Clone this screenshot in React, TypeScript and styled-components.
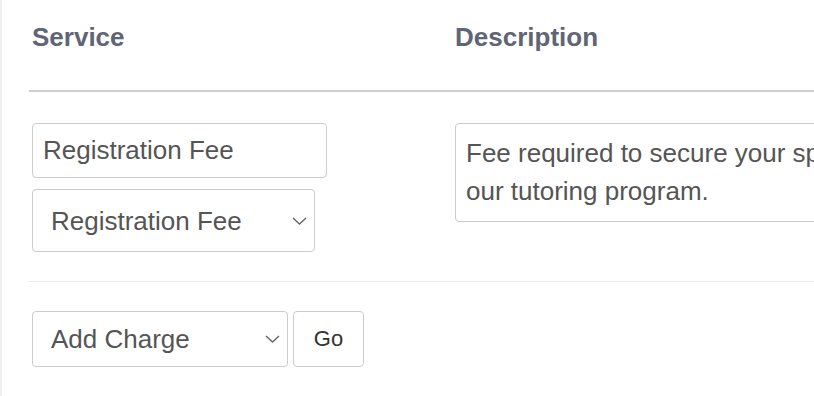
import * as React from 'react';
import styled, { createGlobalStyle } from 'styled-components';

const GlobalStyle = createGlobalStyle`
  html, body {
    margin: 0;
    padding: 0;
    background: #fff;
    overflow: hidden;
  }
  body {
    font-family: "Liberation Sans", Arial, Helvetica, sans-serif;
  }
`;

const Page = styled.div`
  height: 396px;
  border-left: 2px solid #efeff1;
  padding-left: 27px;
  box-sizing: border-box;
`;

const ChargeTable = styled.div`
  display: grid;
  grid-template-columns: 423px 1fr;
`;

const HeadCell = styled.div`
  height: 92px;
  box-sizing: border-box;
  padding: 22px 3px 0;
  border-bottom: 2px solid #cfcfcf;
  font-size: 26px;
  line-height: 30px;
  font-weight: bold;
  color: #5f6576;
`;

const BodyCell = styled.div`
  height: 190px;
  box-sizing: border-box;
  padding: 31px 3px 0;
  border-bottom: 1px solid #ececec;
  display: flex;
  flex-direction: column;
  align-items: flex-start;
  gap: 11px;
`;

const TextInput = styled.input`
  width: 295px;
  height: 55px;
  box-sizing: border-box;
  border: 1px solid #cccccc;
  border-radius: 4px;
  padding: 0 10px;
  font-family: inherit;
  font-size: 26px;
  color: #555;
  outline: none;
`;

const SelectBox = styled.div<{ $w: number; $h: number }>`
  position: relative;
  width: ${(p) => p.$w}px;
  height: ${(p) => p.$h}px;
`;

const Select = styled.select`
  appearance: none;
  -webkit-appearance: none;
  width: 100%;
  height: 100%;
  box-sizing: border-box;
  border: 1px solid #cccccc;
  border-radius: 4px;
  background: #fff;
  padding: 0 34px 0 18px;
  font-family: inherit;
  font-size: 26px;
  color: #555;
  outline: none;
`;

const Chevron = styled.svg`
  position: absolute;
  right: 8px;
  top: 50%;
  margin-top: -4px;
  pointer-events: none;
`;

const DescArea = styled.textarea`
  width: 432px;
  height: 99px;
  box-sizing: border-box;
  border: 1px solid #cccccc;
  border-radius: 4px;
  padding: 10px 10px;
  font-family: inherit;
  font-size: 26px;
  line-height: 38px;
  color: #555;
  resize: none;
  overflow: hidden;
  outline: none;
`;

const AddRow = styled.div`
  padding: 29px 3px 0;
  display: flex;
  align-items: center;
  gap: 5px;
`;

const GoButton = styled.button`
  width: 71px;
  height: 56px;
  box-sizing: border-box;
  border: 1px solid #cccccc;
  border-radius: 4px;
  background: #fff;
  font-family: inherit;
  font-size: 22px;
  color: #333;
  padding: 0;
  cursor: pointer;
`;

const ChevronIcon = () => (
  <Chevron width="15" height="8" viewBox="0 0 15 8">
    <polyline points="1,1 7.5,7 14,1" fill="none" stroke="#666" strokeWidth="1.4" />
  </Chevron>
);

export default function App() {
  return (
    <Page>
      <GlobalStyle />
      <ChargeTable>
        <HeadCell>Service</HeadCell>
        <HeadCell>Description</HeadCell>
        <BodyCell>
          <TextInput defaultValue="Registration Fee" />
          <SelectBox $w={283} $h={63}>
            <Select defaultValue="reg">
              <option value="reg">Registration Fee</option>
            </Select>
            <ChevronIcon />
          </SelectBox>
        </BodyCell>
        <BodyCell>
          <DescArea defaultValue="Fee required to secure your spot in our tutoring program." />
        </BodyCell>
      </ChargeTable>
      <AddRow>
        <SelectBox $w={256} $h={56}>
          <Select defaultValue="">
            <option value="">Add Charge</option>
          </Select>
          <ChevronIcon />
        </SelectBox>
        <GoButton>Go</GoButton>
      </AddRow>
    </Page>
  );
}
